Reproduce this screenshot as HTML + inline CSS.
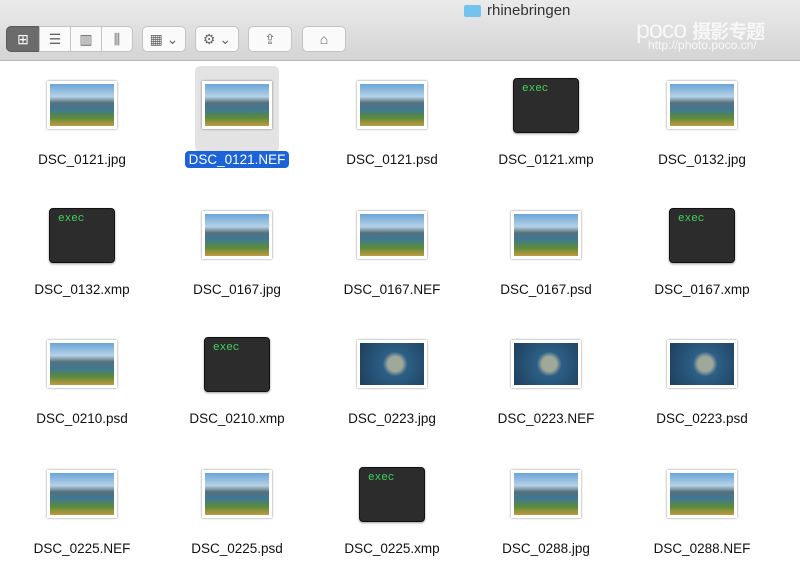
<!DOCTYPE html><html><head><meta charset="utf-8"><style>
body{margin:0;width:800px;height:578px;overflow:hidden;background:#fff;font-family:"Liberation Sans",Arial,sans-serif;position:relative}
.tb{position:absolute;left:0;top:0;width:800px;height:60px;background:linear-gradient(#ebeaeb,#d5d4d5);border-bottom:1px solid #b9b8b9}
.btn{position:absolute;top:26px;height:26px;background:#fafafa;border:1px solid #c4c3c4;border-radius:5px;box-sizing:border-box;color:#666;display:flex;align-items:center;justify-content:center;font-size:14px}
.title{position:absolute;left:487px;top:2px;font-size:15px;color:#333}
.fold{position:absolute;left:464px;top:5px;width:17px;height:12px;background:#74c3ee;border-radius:2px}
.wm{position:absolute;left:636px;top:16px;color:rgba(255,255,255,.75);font-size:25px;font-weight:normal;letter-spacing:-1px;font-family:"Liberation Sans","Noto Sans CJK SC",sans-serif}
.wm b{font-size:19px;margin-left:6px}
.wm2{position:absolute;left:648px;top:38px;color:rgba(255,255,255,.8);font-size:12px}
.it{position:absolute;width:150px;text-align:center;font-size:13.5px;color:#111}
.ph{position:absolute;border:3px solid #fff;box-shadow:0 0 2px rgba(0,0,0,.5);box-sizing:border-box;background:linear-gradient(#6aa5d8 0%,#b6d2e6 30%,#55707a 45%,#3f7896 60%,#5a8a3a 80%,#c09a40 100%)}
.ph.d{background:radial-gradient(circle at 55% 50%,#a0a89a 0 18%,#2d5f86 30%,#1d3f5c 100%)}
.ex{position:absolute;width:66px;height:55px;background:#2c2c2c;border:1px solid #111;border-radius:4px;box-sizing:border-box;box-shadow:0 1px 2px rgba(0,0,0,.4)}
.ex span{position:absolute;left:8px;top:4px;color:#3fd35a;font-family:"Liberation Mono",monospace;font-size:11px}
.sel{background:#1b63d6;color:#fff;border-radius:4px;padding:1px 4px}
</style></head><body>
<div class="tb"></div>
<div class="fold"></div><div class="title">rhinebringen</div>
<div class="btn" style="left:6px;width:34px;background:#6b6b6b;border-color:#5a5a5a;color:#fff;border-radius:5px 0 0 5px">⊞</div>
<div class="btn" style="left:39px;width:32px;border-radius:0">☰</div>
<div class="btn" style="left:70px;width:32px;border-radius:0">▥</div>
<div class="btn" style="left:101px;width:32px;border-radius:0 5px 5px 0">⫼</div>
<div class="btn" style="left:142px;width:44px">▦ ⌄</div>
<div class="btn" style="left:195px;width:44px">⚙ ⌄</div>
<div class="btn" style="left:248px;width:44px">⇪</div>
<div class="btn" style="left:302px;width:44px">⌂</div>
<div class="wm">poco<b>摄影专题</b></div><div class="wm2">http://photo.poco.cn/</div>
<div style="position:absolute;left:195px;top:66px;width:84px;height:86px;background:#e3e3e3;border-radius:5px"></div>
<div id="g"></div>
<script>
var cx=[82,237,392,546,702],ry=[105,235,364,494];
var items=[["DSC_0121.jpg","p"],["DSC_0121.NEF","p"],["DSC_0121.psd","p"],["DSC_0121.xmp","x"],["DSC_0132.jpg","p"],
["DSC_0132.xmp","x"],["DSC_0167.jpg","p"],["DSC_0167.NEF","p"],["DSC_0167.psd","p"],["DSC_0167.xmp","x"],
["DSC_0210.psd","p"],["DSC_0210.xmp","x"],["DSC_0223.jpg","d"],["DSC_0223.NEF","d"],["DSC_0223.psd","d"],
["DSC_0225.NEF","p"],["DSC_0225.psd","p"],["DSC_0225.xmp","x"],["DSC_0288.jpg","p"],["DSC_0288.NEF","p"]];
var h="";
items.forEach(function(it,i){var c=cx[i%5],y=ry[Math.floor(i/5)];
if(it[1]=="x")h+='<div class="ex" style="left:'+(c-33)+'px;top:'+(y-27)+'px"><span>exec</span></div>';
else h+='<div class="ph'+(it[1]=="d"?" d":"")+'" style="left:'+(c-35)+'px;top:'+(y-24)+'px;width:70px;height:48px"></div>';
h+='<div class="it" style="left:'+(c-75)+'px;top:'+(y+47)+'px">'+(i==1?'<span class="sel">'+it[0]+'</span>':it[0])+'</div>';});
document.getElementById("g").innerHTML=h;
</script>
</body></html>
